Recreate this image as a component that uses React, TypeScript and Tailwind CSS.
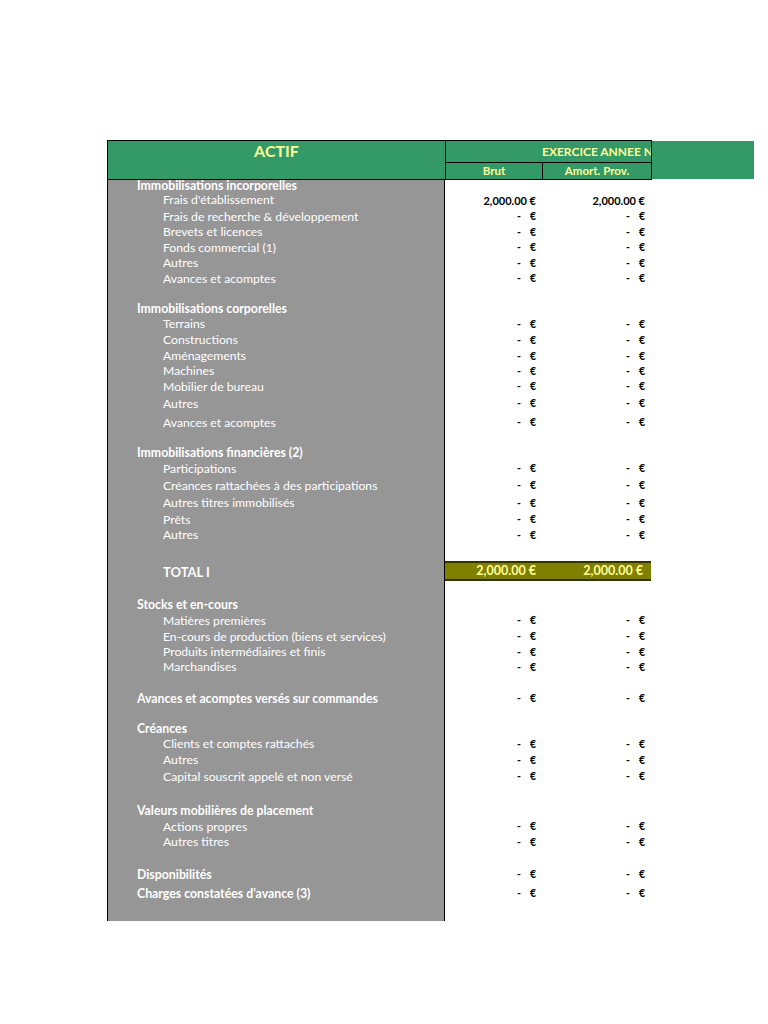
import React from "react";

type Row =
  | { kind: "blank"; h: number }
  | { kind: "group"; h: number; label: string; value?: boolean }
  | { kind: "item"; h: number; label: string; brut?: string; amort?: string }
  | { kind: "total"; h: number; label: string };

const rows: Row[] = [
  { kind: "group", h: 11, label: "Immobilisations incorporelles" },
  { kind: "item", h: 17, label: "Frais d'établissement", brut: "2,000.00 €", amort: "2,000.00 €" },
  { kind: "item", h: 16, label: "Frais de recherche & développement" },
  { kind: "item", h: 15, label: "Brevets et licences" },
  { kind: "item", h: 16, label: "Fonds commercial (1)" },
  { kind: "item", h: 15, label: "Autres" },
  { kind: "item", h: 16, label: "Avances et acomptes" },
  { kind: "blank", h: 14 },
  { kind: "group", h: 16, label: "Immobilisations corporelles" },
  { kind: "item", h: 15, label: "Terrains" },
  { kind: "item", h: 17, label: "Constructions" },
  { kind: "item", h: 15, label: "Aménagements" },
  { kind: "item", h: 15, label: "Machines" },
  { kind: "item", h: 16, label: "Mobilier de bureau" },
  { kind: "item", h: 18, label: "Autres" },
  { kind: "item", h: 20, label: "Avances et acomptes" },
  { kind: "blank", h: 12 },
  { kind: "group", h: 16, label: "Immobilisations financières (2)" },
  { kind: "item", h: 16, label: "Participations" },
  { kind: "item", h: 18, label: "Créances rattachées à des participations" },
  { kind: "item", h: 17, label: "Autres titres immobilisés" },
  { kind: "item", h: 16, label: "Prêts" },
  { kind: "item", h: 15, label: "Autres" },
  { kind: "blank", h: 19 },
  { kind: "total", h: 20, label: "TOTAL I" },
  { kind: "blank", h: 15 },
  { kind: "group", h: 16, label: "Stocks et en-cours" },
  { kind: "item", h: 16, label: "Matières premières" },
  { kind: "item", h: 16, label: "En-cours de production (biens et services)" },
  { kind: "item", h: 15, label: "Produits intermédiaires et finis" },
  { kind: "item", h: 15, label: "Marchandises" },
  { kind: "blank", h: 16 },
  { kind: "group", h: 16, label: "Avances et acomptes versés sur commandes", value: true },
  { kind: "blank", h: 14 },
  { kind: "group", h: 16, label: "Créances" },
  { kind: "item", h: 15, label: "Clients et comptes rattachés" },
  { kind: "item", h: 17, label: "Autres" },
  { kind: "item", h: 16, label: "Capital souscrit appelé et non versé" },
  { kind: "blank", h: 18 },
  { kind: "group", h: 16, label: "Valeurs mobilières de placement" },
  { kind: "item", h: 16, label: "Actions propres" },
  { kind: "item", h: 15, label: "Autres titres" },
  { kind: "blank", h: 16 },
  { kind: "group", h: 18, label: "Disponibilités", value: true },
  { kind: "group", h: 20, label: "Charges constatées d'avance (3)", value: true },
  { kind: "blank", h: 18 },
];

const font = { fontFamily: "Lato, 'Open Sans', sans-serif" };

function Val({ v }: { v?: string }) {
  if (v) {
    return <span className="font-bold text-[11px] text-black leading-none whitespace-nowrap">{v}</span>;
  }
  return (
    <span className="flex gap-[9px] font-bold text-[10.5px] text-black leading-none">
      <span>-</span>
      <span>€</span>
    </span>
  );
}

export default function App() {
  return (
    <div className="min-h-[1024px] w-[768px] bg-white pt-[140px] pl-[107px]" style={font}>
      {/* header */}
      <div className="flex">
        <div className="w-[338px] h-[40px] bg-[#339966] border border-black border-r-0 flex justify-center">
          <span className="text-[#ffff99] text-[16px] font-bold leading-[20px]">ACTIF</span>
        </div>
        <div className="w-[207px] h-[40px] border border-black bg-[#339966] flex flex-col">
          <div className="h-[22px] border-b border-black overflow-hidden relative">
            <span className="absolute left-[96px] top-[5px] whitespace-nowrap text-[#ffff99] text-[12px] font-bold leading-none">
              EXERCICE ANNEE N
            </span>
          </div>
          <div className="flex flex-1">
            <div className="w-[97px] border-r border-black flex justify-center items-center">
              <span className="text-[#ffff99] text-[11.5px] font-bold leading-none">Brut</span>
            </div>
            <div className="flex-1 flex justify-center items-center">
              <span className="text-[#ffff99] text-[11.5px] font-bold leading-none">Amort. Prov.</span>
            </div>
          </div>
        </div>
        <div className="w-[102px] h-[38px] mt-[1px] bg-[#339966]" />
      </div>

      {/* body */}
      <div className="flex flex-col">
        {rows.map((r, i) => {
          const hasVal = r.kind === "item" || (r.kind === "group" && r.value);
          return (
            <div key={i} className="flex" style={{ height: r.h }}>
              <div className="w-[338px] bg-[#969696] border-l border-r border-black flex items-center pt-[2px]">
                {r.kind === "group" && (
                  <span className="pl-[29px] text-white text-[12.3px] font-bold leading-none whitespace-nowrap">
                    {r.label}
                  </span>
                )}
                {r.kind === "item" && (
                  <span className="pl-[55px] text-white text-[12.2px] leading-none whitespace-nowrap">
                    {r.label}
                  </span>
                )}
                {r.kind === "total" && (
                  <span className="pl-[55px] text-white text-[13px] font-bold leading-none whitespace-nowrap">
                    {r.label}
                  </span>
                )}
              </div>
              {r.kind === "total" ? (
                <div className="flex w-[206px] bg-[#808000] border-t-2 border-b-2 border-[#333300]">
                  <div className="w-[97px] flex justify-end items-center pr-[6px]">
                    <span className="text-[#ffff99] text-[12.5px] font-bold leading-none whitespace-nowrap">2,000.00 €</span>
                  </div>
                  <div className="w-[109px] flex justify-end items-center pr-[8px]">
                    <span className="text-[#ffff99] text-[12.5px] font-bold leading-none whitespace-nowrap">2,000.00 €</span>
                  </div>
                </div>
              ) : (
                <div className="flex w-[206px]">
                  <div className="w-[97px] flex justify-end items-center pr-[6px] pt-[1px]">
                    {hasVal && <Val v={r.kind === "item" ? r.brut : undefined} />}
                  </div>
                  <div className="w-[109px] flex justify-end items-center pr-[6px] pt-[1px]">
                    {hasVal && <Val v={r.kind === "item" ? r.amort : undefined} />}
                  </div>
                </div>
              )}
            </div>
          );
        })}
      </div>
    </div>
  );
}
